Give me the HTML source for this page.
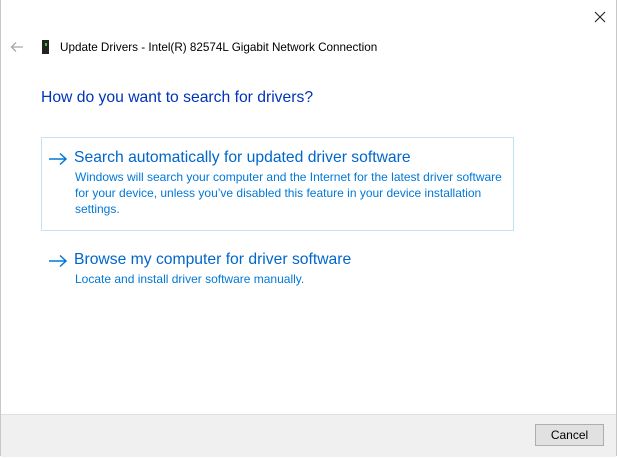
<!DOCTYPE html>
<html><head><style>
body{margin:0;width:619px;height:459px;background:#fff;font-family:"Liberation Sans",sans-serif;position:relative;overflow:hidden}
.win{position:absolute;left:0;top:0;width:617px;height:456px;border:1px solid #c8c8c8;border-top:none;background:#fff;box-sizing:border-box}
.t{position:absolute;white-space:nowrap}
.footer{position:absolute;left:1px;top:414px;width:615px;height:42px;background:#f0f0f0;border-top:1px solid #dfdfdf}
.btn{position:absolute;left:535px;top:424px;width:67px;height:20px;border:1px solid #adadad;background:#e1e1e1;font-size:12px;text-align:center;line-height:20px;color:#000}
.box{position:absolute;left:41px;top:137px;width:473px;height:94px;border:1px solid #c6e0f5;box-sizing:border-box}
</style></head><body>
<div class="win"></div>
<svg class="t" style="left:594px;top:11px" width="12" height="12"><path d="M1 1L11 11M11 1L1 11" stroke="#222" stroke-width="1.1"/></svg>
<svg class="t" style="left:10px;top:41px" width="14" height="12"><path d="M13 6H2M6 1.5L1.5 6 6 10.5" stroke="#a8a8a8" stroke-width="1.3" fill="none"/></svg>
<div class="t" style="left:42px;top:40px;width:7px;height:14px;background:#222"></div>
<div class="t" style="left:45px;top:43px;width:2px;height:3px;background:#3c3"></div>
<div class="t" style="left:60px;top:41px;font-size:11.7px;color:#000">Update Drivers - Intel(R) 82574L Gigabit Network Connection</div>
<div class="t" style="left:41px;top:89px;font-size:15.7px;color:#0033bb">How do you want to search for drivers?</div>
<div class="box"></div>
<svg class="t" style="left:48px;top:152px" width="20" height="14"><path d="M1 7H18M12 1.5L18 7 12 12.5" stroke="#0078d7" stroke-width="1.5" fill="none"/></svg>
<div class="t" style="left:74px;top:149px;font-size:15.7px;color:#0066cc">Search automatically for updated driver software</div>
<div class="t" style="left:75px;top:169px;font-size:12px;line-height:16px;color:#0078d7">Windows will search your computer and the Internet for the latest driver software<br>for your device, unless you’ve disabled this feature in your device installation<br>settings.</div>
<svg class="t" style="left:48px;top:254px" width="20" height="14"><path d="M1 7H18M12 1.5L18 7 12 12.5" stroke="#0078d7" stroke-width="1.5" fill="none"/></svg>
<div class="t" style="left:74px;top:251px;font-size:15.7px;color:#0066cc">Browse my computer for driver software</div>
<div class="t" style="left:75px;top:271px;font-size:12px;line-height:16px;color:#0078d7">Locate and install driver software manually.</div>
<div class="footer"></div>
<div class="btn">Cancel</div>
</body></html>
